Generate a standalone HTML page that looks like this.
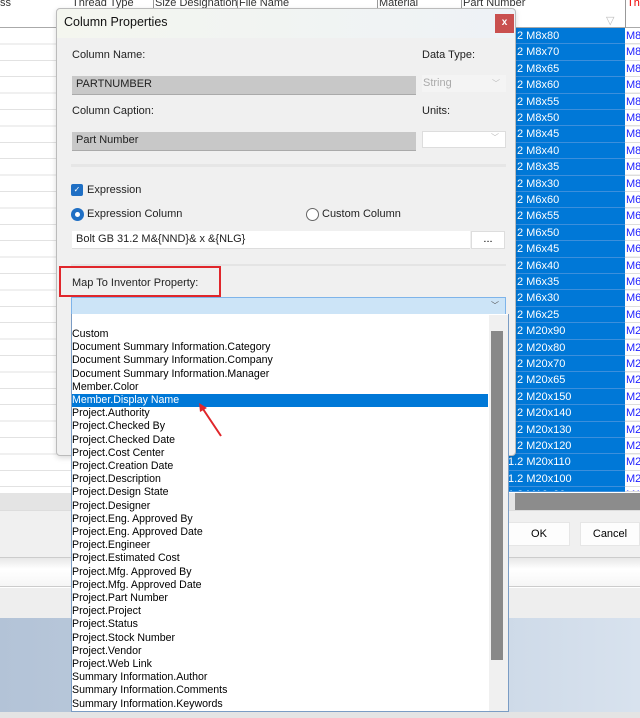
<!DOCTYPE html>
<html><head><style>
*{margin:0;padding:0;box-sizing:border-box}
body{width:640px;height:718px;overflow:hidden;position:relative;background:#fff;font-family:"Liberation Sans",Tahoma,sans-serif;font-size:11px;color:#000}
.a{position:absolute}
.lbl{position:absolute;font-size:11px;color:#222}
.li{position:absolute;left:72px;height:13.2px;line-height:13px;font-size:10.6px;white-space:nowrap}
.br{position:absolute;left:515px;width:110px;height:16.4px;background:#0078d7;color:#fff;font-size:11px;line-height:16px;padding-left:2px;border-bottom:1px solid #3c8fdc;overflow:hidden}
.rc{position:absolute;left:625px;width:15px;height:16.4px;color:#2020ff;font-size:11px;line-height:16px;padding-left:1px;border-bottom:1px solid #ddd;overflow:hidden}
</style></head><body>
<div class="a" style="left:0;top:0;width:640px;height:28px;background:#fff;border-bottom:1px solid #aaa"></div>
<div class="a" style="left:0;top:-3px;color:#333">ss</div>
<div class="a" style="left:72px;top:-3px;color:#333">Thread Type</div>
<div class="a" style="left:153px;top:0;width:1px;height:10px;background:#999"></div>
<div class="a" style="left:155px;top:-3px;color:#333">Size Designation</div>
<div class="a" style="left:237px;top:0;width:1px;height:10px;background:#999"></div>
<div class="a" style="left:239px;top:-3px;color:#333">File Name</div>
<div class="a" style="left:377px;top:0;width:1px;height:10px;background:#999"></div>
<div class="a" style="left:379px;top:-3px;color:#333">Material</div>
<div class="a" style="left:461px;top:0;width:1px;height:10px;background:#999"></div>
<div class="a" style="left:463px;top:-3px;color:#333">Part Number</div>
<div class="a" style="left:625px;top:0;width:1px;height:28px;background:#999"></div>
<div class="a" style="left:627px;top:-3px;color:#e00">Thr</div>
<div class="a" style="left:606px;top:14px;color:#bbb;font-size:11px">▽</div>
<div class="a" style="left:0;top:28px;width:640px;height:465px;background:repeating-linear-gradient(#fff 0,#fff 15.4px,#e2e2e2 15.4px,#e2e2e2 16.4px)"></div>
<div id="rows"></div>
<div class="a" style="left:0;top:493px;width:640px;height:17px;background:#e4e4e4"></div>
<div class="a" style="left:515px;top:493px;width:125px;height:17px;background:#8c8c8c"></div>
<div class="a" style="left:0;top:510px;width:640px;height:47px;background:#f0f0f0;border-top:1px solid #ddd"></div>
<div class="a" style="left:508px;top:522px;width:62px;height:24px;background:#fdfdfd;border:1px solid #e6e6e6;text-align:center;line-height:23px;font-size:11px">OK</div>
<div class="a" style="left:580px;top:522px;width:60px;height:24px;background:#fdfdfd;border:1px solid #e6e6e6;text-align:center;line-height:23px;font-size:11px">Cancel</div>
<div class="a" style="left:0;top:557px;width:640px;height:30px;background:linear-gradient(#e8e8e8,#fff 40%,#f6f6f6);border-top:1px solid #ccc;border-bottom:1px solid #ccc"></div>
<div class="a" style="left:0;top:588px;width:640px;height:30px;background:#eeeeee"></div>
<div class="a" style="left:0;top:618px;width:640px;height:94px;background:linear-gradient(90deg,#b3c3d7,#c5d3e3 60%,#d8e2ee)"></div>
<div class="a" style="left:0;top:712px;width:640px;height:6px;background:#e4e4e4"></div>
<div class="a" style="left:56px;top:8px;width:460px;height:448px;background:#f0f0f0;border:1px solid #bbb;border-radius:4px;box-shadow:0 2px 6px rgba(0,0,0,.15)"></div>
<div class="a" style="left:57px;top:9px;width:458px;height:29px;background:linear-gradient(90deg,#f4f6ef,#eef2f6);border-radius:4px 4px 0 0"></div>
<div class="a" style="left:64px;top:15px;font-size:12.5px;color:#111">Column Properties</div>
<div class="a" style="left:495px;top:14px;width:19px;height:19px;background:#c9504f;color:#fff;text-align:center;font-size:10px;line-height:18px;font-weight:bold">x</div>
<div class="lbl" style="left:72px;top:49px">Column Name:</div>
<div class="a" style="left:72px;top:76px;width:344px;height:19px;background:#c8c8c8;border-bottom:1px solid #aaa;padding-left:4px;line-height:17px;color:#222">PARTNUMBER</div>
<div class="lbl" style="left:422px;top:49px">Data Type:</div>
<div class="a" style="left:422px;top:75px;width:84px;height:17px;background:#f4f4f4;color:#aaa;padding-left:1px;line-height:17px">String<span style="position:absolute;right:6px;top:0;color:#bbb;font-size:8px">﹀</span></div>
<div class="lbl" style="left:72px;top:105px">Column Caption:</div>
<div class="a" style="left:72px;top:132px;width:344px;height:19px;background:#c8c8c8;border-bottom:1px solid #aaa;padding-left:4px;line-height:17px;color:#222">Part Number</div>
<div class="lbl" style="left:422px;top:105px">Units:</div>
<div class="a" style="left:422px;top:131px;width:84px;height:17px;background:#fff;border:1px solid #ddd"><span style="position:absolute;right:6px;top:0;color:#bbb;font-size:8px">﹀</span></div>
<div class="a" style="left:71px;top:164px;width:435px;height:3px;background:#e6e6e6"></div>
<div class="a" style="left:71px;top:184px;width:12px;height:12px;background:#1f6fc4;border-radius:2px;color:#fff;font-size:8px;text-align:center;line-height:12px">✓</div>
<div class="lbl" style="left:87px;top:184px">Expression</div>
<div class="a" style="left:71px;top:208px;width:13px;height:13px;border-radius:50%;background:#1f6fc4"></div>
<div class="a" style="left:75px;top:212px;width:5px;height:5px;border-radius:50%;background:#fff"></div>
<div class="lbl" style="left:87px;top:208px">Expression Column</div>
<div class="a" style="left:306px;top:208px;width:13px;height:13px;border-radius:50%;border:1px solid #666;background:#fff"></div>
<div class="lbl" style="left:322px;top:208px">Custom Column</div>
<div class="a" style="left:72px;top:231px;width:398px;height:18px;background:#fff;border-bottom:1px solid #ddd;padding-left:4px;line-height:17px;color:#222">Bolt GB 31.2 M&amp;{NND}&amp; x &amp;{NLG}</div>
<div class="a" style="left:471px;top:231px;width:34px;height:18px;background:#fff;border:1px solid #ddd;text-align:center;line-height:14px">...</div>
<div class="a" style="left:71px;top:264px;width:435px;height:2px;background:#e4e4e4"></div>
<div class="a" style="left:59px;top:266px;width:162px;height:31px;border:2px solid #e0262b"></div>
<div class="lbl" style="left:72px;top:277px">Map To Inventor Property:</div>
<div class="a" style="left:71px;top:297px;width:435px;height:18px;background:#cce4f7;border:1px solid #7eb4ea"><span style="position:absolute;right:6px;top:2px;color:#555;font-size:8px">﹀</span></div>
<div class="a" style="left:71px;top:314px;width:438px;height:398px;background:#fff;border:1px solid #7a9cc4;border-top:none"></div>
<div class="a" style="left:489px;top:315px;width:19px;height:396px;background:#f0f0f0"></div>
<div class="a" style="left:491px;top:331px;width:12px;height:329px;background:#888"></div>
<div class="a" style="left:72px;top:394px;width:416px;height:13px;background:#0078d7"></div>
<div id="list"></div>
<svg class="a" style="left:195px;top:400px" width="32" height="40"><line x1="26" y1="36" x2="6" y2="6" stroke="#e0262b" stroke-width="2"/><path d="M4 3 L5 12 L12 8 Z" fill="#e0262b"/></svg>
<script>
var b=["2 M8x80","2 M8x70","2 M8x65","2 M8x60","2 M8x55","2 M8x50","2 M8x45","2 M8x40","2 M8x35","2 M8x30","2 M6x60","2 M6x55","2 M6x50","2 M6x45","2 M6x40","2 M6x35","2 M6x30","2 M6x25","2 M20x90","2 M20x80","2 M20x70","2 M20x65","2 M20x150","2 M20x140","2 M20x130","2 M20x120","1.2 M20x110","1.2 M20x100","1.2 M16x90"];
var r=["M8","M8","M8","M8","M8","M8","M8","M8","M8","M8","M6","M6","M6","M6","M6","M6","M6","M6","M2","M2","M2","M2","M2","M2","M2","M2","M2","M2","M1"];
var h="";for(var i=0;i<b.length;i++){var y=28+i*16.4;h+='<div class="br" style="top:'+y+'px'+(i>=26?';left:506px;width:119px':'')+(i==28?';height:5px':'')+'">'+b[i]+'</div><div class="rc" style="top:'+y+'px'+(i==28?';height:5px':'')+'">'+r[i]+'</div>';}
document.getElementById("rows").innerHTML=h;
var L=["Custom","Document Summary Information.Category","Document Summary Information.Company","Document Summary Information.Manager","Member.Color","Member.Display Name","Project.Authority","Project.Checked By","Project.Checked Date","Project.Cost Center","Project.Creation Date","Project.Description","Project.Design State","Project.Designer","Project.Eng. Approved By","Project.Eng. Approved Date","Project.Engineer","Project.Estimated Cost","Project.Mfg. Approved By","Project.Mfg. Approved Date","Project.Part Number","Project.Project","Project.Status","Project.Stock Number","Project.Vendor","Project.Web Link","Summary Information.Author","Summary Information.Comments","Summary Information.Keywords"];
var s="";for(var j=0;j<L.length;j++){s+='<div class="li" style="top:'+(328+j*13.2)+'px'+(j==5?';color:#fff':'')+'">'+L[j]+'</div>';}
document.getElementById("list").innerHTML=s;
</script>
</body></html>
